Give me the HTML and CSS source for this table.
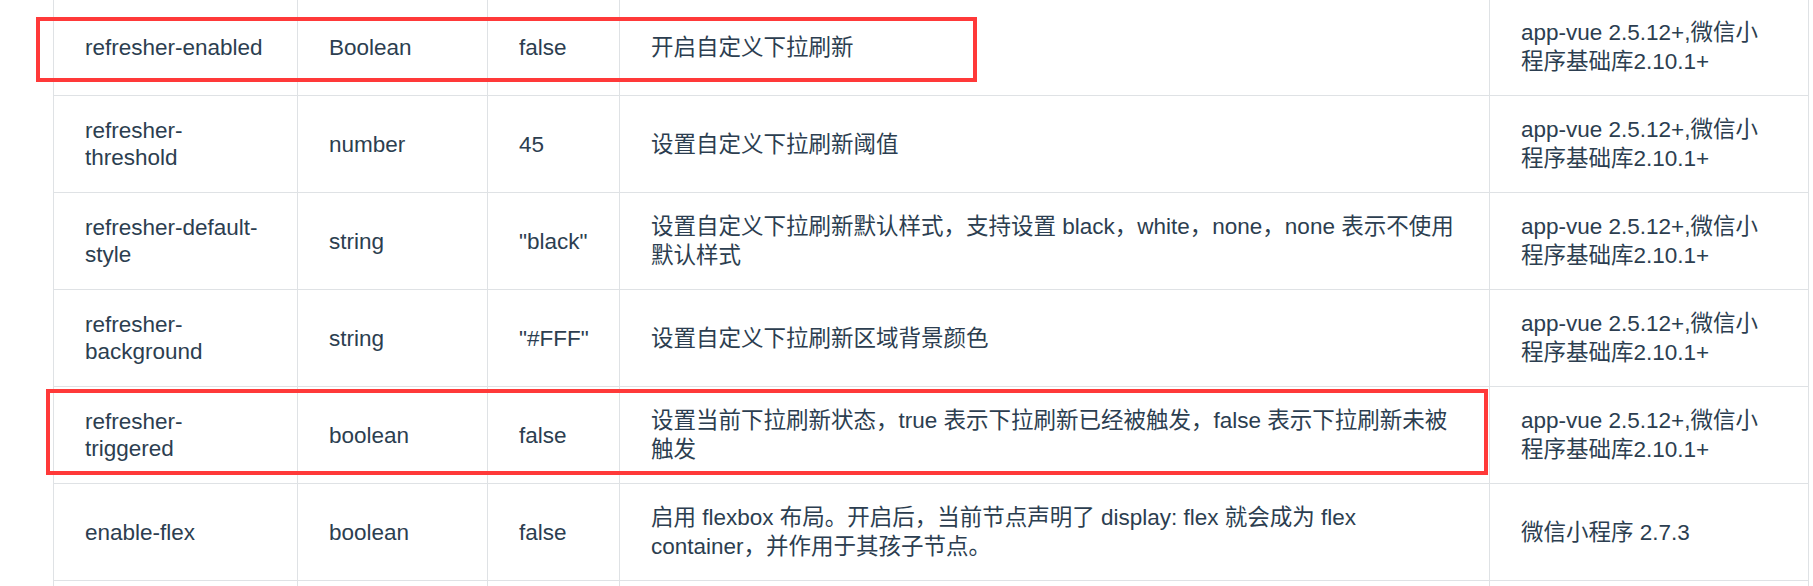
FILE: index.html
```html
<!DOCTYPE html>
<html lang="zh-CN">
<head>
    <meta charset="UTF-8">
    <title>scroll-view 属性</title>
    <link rel="stylesheet" href="styles.css">
</head>
<body>
    <div class="page">
        <table class="props">
            <colgroup>
                <col class="col-name">
                <col class="col-type">
                <col class="col-default">
                <col class="col-desc">
                <col class="col-platform">
            </colgroup>
            <tbody>
                <tr>
                    <td class="name">refresher-enabled</td>
                    <td>Boolean</td>
                    <td>false</td>
                    <td>开启自定义下拉刷新</td>
                    <td>app-vue 2.5.12+,微信小程序基础库2.10.1+</td>
                </tr>
                <tr>
                    <td class="name">refresher-threshold</td>
                    <td>number</td>
                    <td>45</td>
                    <td>设置自定义下拉刷新阈值</td>
                    <td>app-vue 2.5.12+,微信小程序基础库2.10.1+</td>
                </tr>
                <tr>
                    <td class="name">refresher-default-style</td>
                    <td>string</td>
                    <td>"black"</td>
                    <td>设置自定义下拉刷新默认样式，支持设置 black，white，none，none 表示不使用默认样式</td>
                    <td>app-vue 2.5.12+,微信小程序基础库2.10.1+</td>
                </tr>
                <tr>
                    <td class="name">refresher-background</td>
                    <td>string</td>
                    <td>"#FFF"</td>
                    <td>设置自定义下拉刷新区域背景颜色</td>
                    <td>app-vue 2.5.12+,微信小程序基础库2.10.1+</td>
                </tr>
                <tr>
                    <td class="name">refresher-triggered</td>
                    <td>boolean</td>
                    <td>false</td>
                    <td>设置当前下拉刷新状态，true 表示下拉刷新已经被触发，false 表示下拉刷新未被触发</td>
                    <td>app-vue 2.5.12+,微信小程序基础库2.10.1+</td>
                </tr>
                <tr>
                    <td class="name">enable-flex</td>
                    <td>boolean</td>
                    <td>false</td>
                    <td>启用 flexbox 布局。开启后，当前节点声明了 display: flex 就会成为 flex container，并作用于其孩子节点。</td>
                    <td>微信小程序 2.7.3</td>
                </tr>
                <!-- 下一行只露出顶部的格线 -->
                <tr class="cut">
                    <td></td>
                    <td></td>
                    <td></td>
                    <td></td>
                    <td></td>
                </tr>
            </tbody>
        </table>

        <!-- 标注框 -->
        <div class="mark mark-first"></div>
        <div class="mark mark-second"></div>
    </div>
</body>
</html>
```

FILE: styles.css
```css
* {
    margin: 0;
    padding: 0;
    box-sizing: border-box;
}

body {
    font-family: "Liberation Sans", Arial, "Noto Sans CJK SC", sans-serif;
    color: #2c3e50;
    background: #fff;
    overflow: hidden;
}

.page {
    position: relative;
    padding-left: 53px;
}

.props {
    margin-top: -2px;
    width: 1755px;
    table-layout: fixed;
    border-collapse: collapse;
    font-size: 22.5px;
}

.col-name {
    width: 244px;
}

.col-type {
    width: 190px;
}

.col-default {
    width: 132px;
}

.col-desc {
    width: 870px;
}

.col-platform {
    width: 319px;
}

.props td {
    height: 97px;
    padding: 0 30px 0 31px;
    border: 1px solid #dfe2e5;
    vertical-align: middle;
    line-height: 29px;
    text-align: left;
}

.props td.name {
    line-height: 27px;
}

.props tr.cut td {
    height: 20px;
}

.mark {
    position: absolute;
    border: 4px solid #ff3939;
}

.mark-first {
    left: 36px;
    top: 19px;
    width: 941px;
    height: 65px;
}

.mark-second {
    left: 46px;
    top: 391px;
    width: 1442px;
    height: 86px;
}
```
